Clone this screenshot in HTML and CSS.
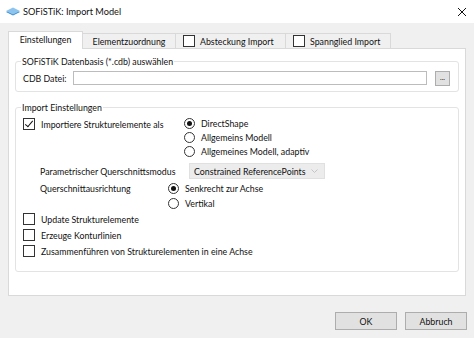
FILE: index.html
```html
<!DOCTYPE html>
<html lang="de">
<head>
    <meta charset="UTF-8">
    <meta name="viewport" content="width=device-width, initial-scale=1.0">
    <title>SOFiSTiK: Import Model</title>
    <link rel="stylesheet" href="styles.css">
</head>
<body>

<div class="window">
    <div class="titlebar">
        <svg class="app-icon" width="14" height="10" viewBox="0 0 14 10">
            <polygon points="0,5 7,1.5 14,5 7,8.5" fill="#3d8fd1"/>
            <polygon points="0,4 7,0.5 14,4 7,7.5" fill="#8cc4ee"/>
        </svg>
        <span class="title">SOFiSTiK: Import Model</span>
        <svg class="close" width="10" height="10" viewBox="0 0 10 10">
            <path d="M1 1 L9 9 M9 1 L1 9" stroke="#111" stroke-width="1"/>
        </svg>
    </div>

    <div class="content">
        <div class="tabs">
            <div class="tab tab-active tab-settings">Einstellungen</div>
            <div class="tab tab-mapping">Elementzuordnung</div>
            <div class="tab tab-check tab-stakeout"><span class="tab-box"></span>Absteckung Import</div>
            <div class="tab tab-check tab-tendon"><span class="tab-box"></span>Spannglied Import</div>
        </div>

        <div class="tab-page">
            <fieldset class="group group-cdb">
                <legend>SOFiSTiK Datenbasis (*.cdb) auswählen</legend>
                <div class="file-row">
                    <span class="file-label">CDB Datei:</span>
                    <div class="textbox"></div>
                    <div class="browse">...</div>
                </div>
            </fieldset>

            <fieldset class="group group-import">
                <legend>Import Einstellungen</legend>

                <div class="row-import">
                    <div class="check-item check-main"><span class="box box-checked"></span>Importiere Strukturelemente als</div>
                    <div class="radio-list">
                        <div class="radio-item"><span class="radio radio-on"></span>DirectShape</div>
                        <div class="radio-item"><span class="radio"></span>Allgemeins Modell</div>
                        <div class="radio-item"><span class="radio"></span>Allgemeines Modell, adaptiv</div>
                    </div>
                </div>

                <div class="row-param">
                    <span class="param-label">Parametrischer Querschnittsmodus</span>
                    <div class="combo">
                        <span>Constrained ReferencePoints</span>
                        <svg class="combo-arrow" width="7" height="4" viewBox="0 0 7 4">
                            <path d="M0.5 0.5 L3.5 3.5 L6.5 0.5" stroke="#c4c4c4" fill="none"/>
                        </svg>
                    </div>
                </div>

                <div class="row-orient">
                    <span class="orient-label">Querschnittausrichtung</span>
                    <div class="radio-list">
                        <div class="radio-item orient-item"><span class="radio radio-on"></span>Senkrecht zur Achse</div>
                        <div class="radio-item orient-item"><span class="radio"></span>Vertikal</div>
                    </div>
                </div>

                <div class="check-list">
                    <div class="check-item"><span class="box"></span>Update Strukturelemente</div>
                    <div class="check-item"><span class="box"></span>Erzeuge Konturlinien</div>
                    <div class="check-item"><span class="box"></span>Zusammenführen von Strukturelementen in eine Achse</div>
                </div>
            </fieldset>
        </div>

        <div class="buttons">
            <div class="btn">OK</div>
            <div class="btn">Abbruch</div>
        </div>
    </div>
</div>

</body>
</html>
```

FILE: styles.css
```css
body {
    margin: 0;
    padding: 0;
    background-color: #f0f0f0;
    color: #111;
    font-family: Lato, "Noto Sans", sans-serif;
    font-size: 8.8px;
    white-space: nowrap;
}
.window {
    width: 474px;
    height: 338px;
    display: flex;
    flex-direction: column;
    overflow: hidden;
}
.titlebar {
    height: 23px;
    background-color: #fff;
    display: flex;
    align-items: center;
    padding-left: 6px;
    padding-right: 7px;
}
.app-icon {
    margin-right: 3px;
}
.title {
    flex: 1;
    font-size: 9.2px;
}
.content {
    flex: 1;
    padding: 8px 8px 0 8px;
}
.tabs {
    display: flex;
    align-items: flex-end;
    height: 17px;
    padding-left: 1px;
}
.tab {
    height: 15px;
    display: flex;
    align-items: center;
    justify-content: center;
    background-color: #f0f0f0;
    border: 1px solid #d9d9d9;
    border-bottom: none;
    box-sizing: border-box;
    margin-left: -1px;
}
.tab-active {
    height: 18px;
    background-color: #fff;
    margin-bottom: -1px;
    position: relative;
    z-index: 1;
    padding-bottom: 2px;
}
.tab-settings {
    width: 75px;
}
.tab-mapping {
    width: 94px;
}
.tab-check {
    justify-content: flex-start;
    padding-left: 7px;
}
.tab-stakeout {
    width: 111px;
}
.tab-tendon {
    width: 106px;
}
.tab-box {
    width: 10px;
    height: 10px;
    border: 1px solid #333;
    background-color: #fff;
    margin-right: 5px;
}
.tab-page {
    height: 248px;
    box-sizing: border-box;
    background-color: #fff;
    border: 1px solid #d9d9d9;
    padding: 6px 6px 0 6px;
}
.group {
    margin: 0;
    border: 1px solid #e3e3e3;
    border-radius: 3px;
    padding: 0 7px 0 7px;
}
.group legend {
    padding: 0 1px;
    margin-left: -2px;
    line-height: 13px;
}
.group-cdb {
    padding-bottom: 5px;
}
.file-row {
    display: flex;
    align-items: center;
    height: 16px;
    margin-top: 2px;
}
.file-label {
    width: 50px;
}
.textbox {
    width: 354px;
    height: 14px;
    border: 1px solid #bcbcbc;
    box-sizing: border-box;
    background-color: #fff;
}
.browse {
    width: 15px;
    height: 15px;
    box-sizing: border-box;
    margin-left: 8px;
    border: 1px solid #adadad;
    background-color: #e1e1e1;
    font-size: 7px;
    line-height: 10px;
    text-align: center;
}
.group-import {
    margin-top: 9px;
    padding-top: 2px;
    padding-bottom: 12px;
}
.row-import {
    display: flex;
}
.check-main {
    width: 161px;
    align-self: flex-start;
}
.check-item {
    display: flex;
    align-items: center;
    height: 16px;
}
.box {
    width: 12px;
    height: 12px;
    box-sizing: border-box;
    border: 1px solid #333;
    background-color: #fff;
    margin-right: 6px;
    position: relative;
}
.box-checked::after {
    content: "";
    position: absolute;
    left: 3px;
    top: 0px;
    width: 3px;
    height: 7px;
    border: solid #111;
    border-width: 0 1.5px 1.5px 0;
    transform: rotate(40deg);
}
.radio-item {
    display: flex;
    align-items: center;
    height: 14px;
}
.radio {
    width: 11px;
    height: 11px;
    box-sizing: border-box;
    border: 1px solid #333;
    border-radius: 50%;
    background-color: #fff;
    margin-right: 6px;
    display: flex;
    align-items: center;
    justify-content: center;
}
.radio-on::after {
    content: "";
    width: 5px;
    height: 5px;
    border-radius: 50%;
    background-color: #111;
}
.row-param {
    display: flex;
    align-items: center;
    height: 16px;
    margin-top: 5px;
    padding-left: 17px;
}
.param-label {
    width: 149px;
}
.combo {
    width: 136px;
    height: 16px;
    box-sizing: border-box;
    background-color: #ececec;
    border: 1px solid #e0e0e0;
    display: flex;
    align-items: center;
    justify-content: space-between;
    padding: 0 6px 0 4px;
}
.row-orient {
    display: flex;
    margin-top: 2px;
    padding-left: 17px;
}
.orient-label {
    width: 128px;
    line-height: 15px;
}
.orient-item {
    height: 15px;
}
.check-list {
    margin-top: 0;
}
.buttons {
    display: flex;
    justify-content: flex-end;
    gap: 8px;
    margin-top: 16px;
    margin-right: -1px;
}
.btn {
    width: 62px;
    height: 18px;
    box-sizing: border-box;
    border: 1px solid #adadad;
    background-color: #e1e1e1;
    display: flex;
    align-items: center;
    justify-content: center;
}
```
